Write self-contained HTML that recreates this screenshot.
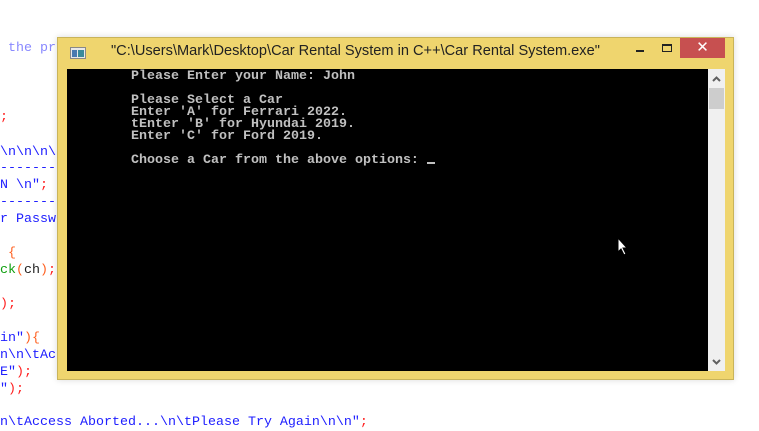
<!DOCTYPE html>
<html><head><meta charset="utf-8"><style>
*{margin:0;padding:0;box-sizing:border-box}
body{width:759px;height:423px;background:#fff;position:relative;overflow:hidden;font-family:"Liberation Sans",sans-serif}
.code{position:absolute;left:0;font-family:"Liberation Mono",monospace;font-size:13.33px;line-height:17px;white-space:pre;color:#2020ff}
.r{color:#ff2020}.g{color:#10a010}.k{color:#202020}.o{color:#ff6020}
.win{position:absolute;left:57px;top:37px;width:677px;height:343px;background:#efd56e;border:1px solid #c9b45a;box-shadow:0 0 6px rgba(0,0,0,.15)}
.title{position:absolute;left:53px;top:5px;font-size:14.6px;color:#222;white-space:nowrap}
.con{position:absolute;left:9px;top:31px;width:641px;height:302px;background:#000}
.txt{position:absolute;left:64px;top:2px;font-family:"Liberation Mono",monospace;font-weight:bold;font-size:13.33px;line-height:12px;color:#c0c0c0;white-space:pre}
.sb{position:absolute;left:650px;top:31px;width:17px;height:302px;background:#f0f0f0}
.thumb{position:absolute;left:1px;top:19px;width:15px;height:21px;background:#cdcdcd}
.close{position:absolute;left:622px;top:0;width:45px;height:20px;background:#c75050;color:#fff;text-align:center;font-size:15px;line-height:20px}
</style></head><body>
<div class="code" style="top:40px;color:#8888ff"> the pr</div>
<div class="code r" style="top:109px">;</div>
<div class="code" style="top:144px">\n\n\n\</div>
<div class="code" style="top:160px">--------</div>
<div class="code" style="top:177px">N \n"<span class="r">;</span></div>
<div class="code" style="top:194px">--------</div>
<div class="code" style="top:211px">r Passw</div>
<div class="code o" style="top:245px"> {</div>
<div class="code g" style="top:262px">ck<span class="o">(</span><span class="k">ch</span><span class="o">)</span><span class="r">;</span></div>
<div class="code r" style="top:296px">);</div>
<div class="code" style="top:330px">in"<span class="o">){</span></div>
<div class="code" style="top:347px">n\n\tAc</div>
<div class="code" style="top:364px">E"<span class="r">);</span></div>
<div class="code" style="top:381px">"<span class="r">);</span></div>
<div class="code" style="top:414px">n\tAccess Aborted...\n\tPlease Try Again\n\n"<span class="r">;</span></div>
<div class="win">
 <svg style="position:absolute;left:12px;top:9px" width="16" height="12"><rect x="0.5" y="0.5" width="15" height="11" fill="#e8e8e8" stroke="#888"/><rect x="2" y="3" width="5" height="7" fill="#4a7ab0"/><rect x="8" y="3" width="6" height="7" fill="#3a8a9a"/></svg>
 <div class="title">"C:\Users\Mark\Desktop\Car Rental System in C++\Car Rental System.exe"</div>
 <div style="position:absolute;left:578px;top:12px;width:8px;height:2px;background:#222"></div>
 <div style="position:absolute;left:604px;top:6px;width:10px;height:8px;border:1px solid #222;border-top-width:2px"></div>
 <div class="close">✕</div>
 <div class="con"><div class="txt">Please Enter your Name: John

Please Select a Car
Enter 'A' for Ferrari 2022.
tEnter 'B' for Hyundai 2019.
Enter 'C' for Ford 2019.

Choose a Car from the above options: <span style="display:inline-block;width:8px;height:2px;background:#c0c0c0;vertical-align:-1px"></span></div>
  <svg style="position:absolute;left:550px;top:168px" width="12" height="19"><path d="M1 1 L1 15 L4 12 L7 18 L9 17 L6 11 L10 11 Z" fill="#fff" stroke="#000" stroke-width="1"/></svg>
 </div>
 <div class="sb"><svg style="position:absolute;left:4px;top:7px" width="9" height="6"><path d="M1 5 L4.5 1.5 L8 5" fill="none" stroke="#606060" stroke-width="2"/></svg><div class="thumb"></div><svg style="position:absolute;left:4px;top:290px" width="9" height="6"><path d="M1 1 L4.5 4.5 L8 1" fill="none" stroke="#606060" stroke-width="2"/></svg></div>
</div>
</body></html>
